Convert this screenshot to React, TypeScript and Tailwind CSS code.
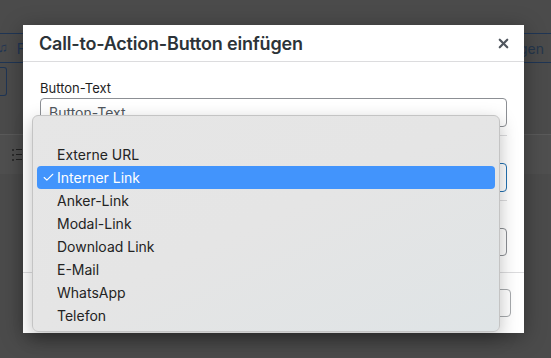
import { Check, X } from 'lucide-react'

const options = [
  '',
  'Externe URL',
  'Interner Link',
  'Anker-Link',
  'Modal-Link',
  'Download Link',
  'E-Mail',
  'WhatsApp',
  'Telefon',
]

export default function App() {
  const selected = 'Interner Link'

  return (
    <div className="relative w-[551px] h-[358px] overflow-hidden bg-[#4b4b4b] font-['Inter','Liberation_Sans',sans-serif]">
      {/* dimmed page behind the modal */}
      <div className="pt-[33px]">
        <div className="h-[30px] border-y border-[#1f3554] flex items-center justify-between">
          <div className="flex items-center gap-[9px] -ml-[2px] text-[#1f3554]">
            <span className="text-[13px] font-bold">♫</span>
            <span className="text-[14px]">F</span>
          </div>
          <span className="text-[14px] text-[#25364b] mr-[7px]">Hinzufügen</span>
        </div>
        <div className="h-[29px] w-[7px] mt-[4px] rounded-r-[3px] border border-l-0 border-[#1f3554]" />
        <div className="mt-[38px] border-t border-[#5a5a5a] h-[40px] bg-[#4f4f4f] flex items-center pl-[12px]">
          <div className="flex flex-col gap-[3px]">
            {[0, 1, 2].map(i => (
              <div key={i} className="flex items-center gap-[2px]">
                <span className="w-[2px] h-[2px] rounded-full bg-[#222]" />
                <span className="w-[6px] h-[1px] bg-[#222]" />
              </div>
            ))}
          </div>
        </div>
      </div>

      {/* modal */}
      <div className="absolute left-[23px] top-[25px] w-[501px] h-[308px] bg-white shadow-[0_4px_20px_rgba(0,0,0,0.35)] flex flex-col">
        <div className="h-[37px] shrink-0 border-b border-[#dcdcde] px-[16px] flex items-center justify-between">
          <h2 className="text-[18px] font-semibold text-[#2c3338] tracking-[-0.2px]">Call-to-Action-Button einfügen</h2>
          <X size={15} strokeWidth={3.5} className="text-[#50575e] mr-[-3px]" />
        </div>

        <div className="flex-1 px-[17px] pt-[17px]">
          <div className="pb-[8px] border-b border-[#dcdcde]">
            <label className="block text-[13px] text-[#1e1e1e] leading-[18px] mb-[1px]">Button-Text</label>
            <div className="h-[29px] border border-[#8c8f94] rounded-[4px] px-[8px] flex items-center text-[14px] text-[#50575e]">
              Button-Text
            </div>
          </div>
          {/* link type select, its label hidden under the popup */}
          <div className="pt-[8px] pb-[8px] border-b border-[#dcdcde]">
            <div className="h-[19px]" />
            <div className="h-[29px] border-[1.5px] border-[#2271b1] rounded-[4px]" />
          </div>
          <div className="pt-[9px]">
            <div className="h-[18px]" />
            <div className="h-[28px] border border-[#8c8f94] rounded-[4px]" />
          </div>
        </div>

        <div className="h-[61px] shrink-0 border-t border-[#dcdcde] flex items-start justify-end pt-[16px] pr-[13px]">
          <div className="h-[28px] w-[80px] border border-[#a7aaad] rounded-[4px]" />
        </div>
      </div>

      {/* native select popup */}
      <div className="absolute left-[32px] top-[115px] w-[468px] h-[217px] rounded-[6px] border border-[#c4c4c4] bg-gradient-to-br from-[#e6e6e6] via-[#e5e5e5] to-[#dfe4e6] shadow-[0_6px_18px_rgba(0,0,0,0.25)] px-[4px] pt-[4px]">
        {options.map((opt, i) => {
          const active = opt === selected
          return (
            <div
              key={i}
              className={
                active
                  ? 'relative h-[23px] rounded-[4px] bg-[#4294fc] text-white pl-[20px] flex items-center text-[14px]'
                  : 'relative h-[23px] pl-[20px] flex items-center text-[14px] text-[#232323]'
              }
            >
              {active && <Check size={13} strokeWidth={2} className="absolute left-[5px] top-[5px]" />}
              {opt}
            </div>
          )
        })}
      </div>
    </div>
  )
}
